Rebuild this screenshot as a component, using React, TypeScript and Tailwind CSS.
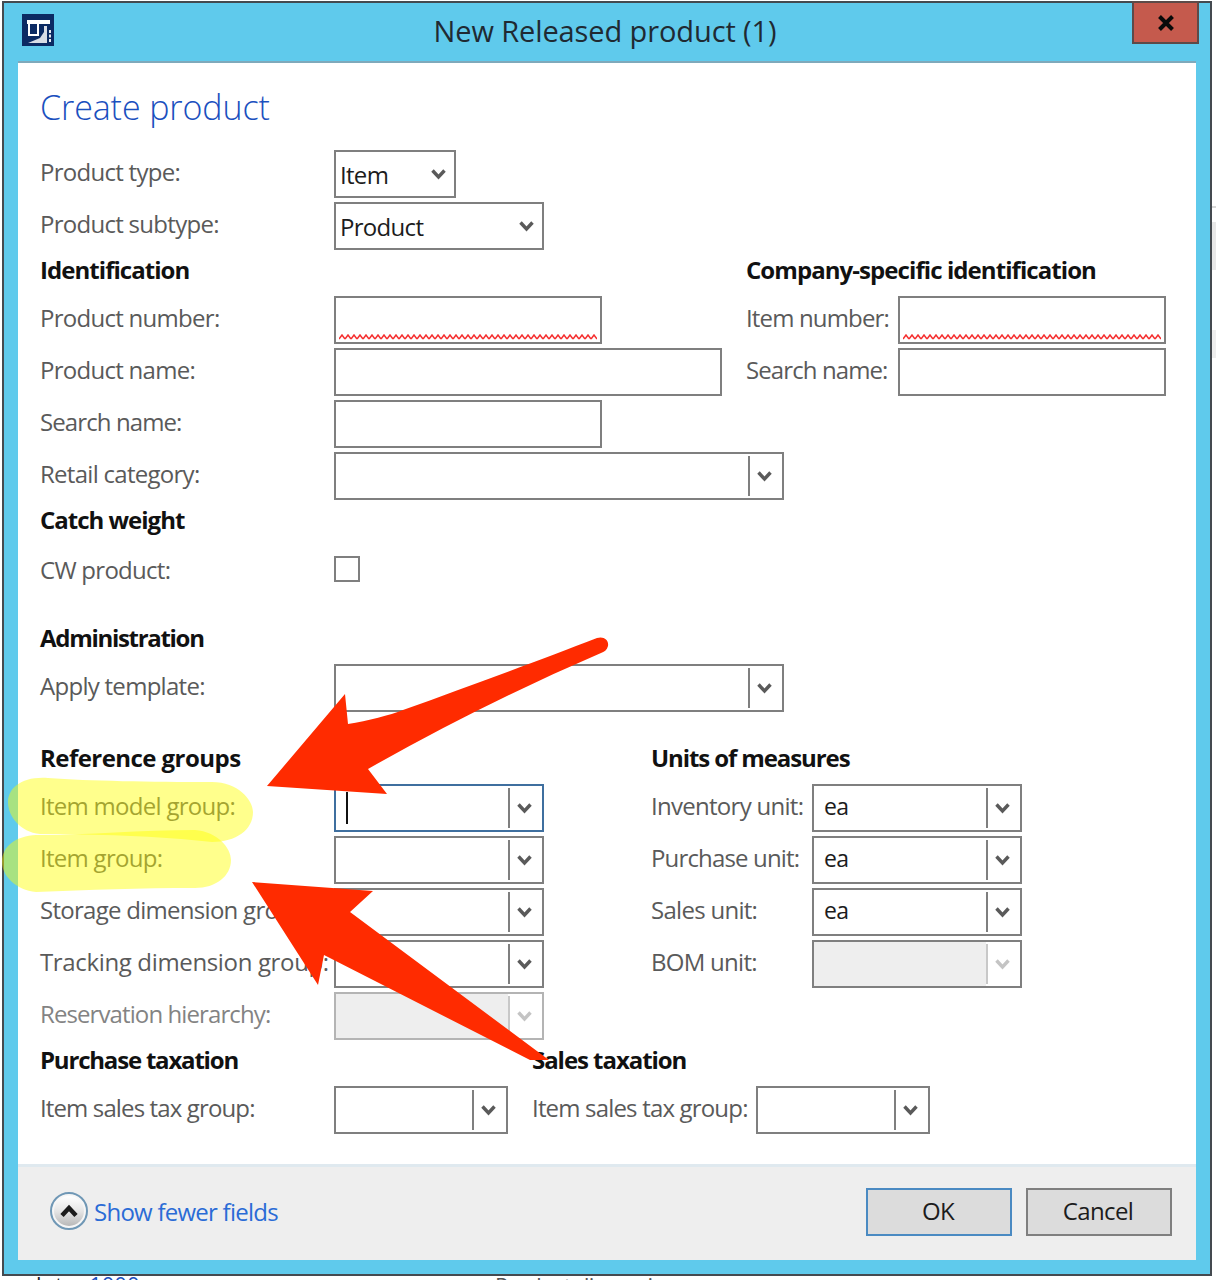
import React from "react";

const labelCls = "text-[24px] text-[#5a5a5a] whitespace-nowrap leading-none";

function Chevron({ dim }: { dim?: boolean }) {
  return (
    <svg width="15" height="11" viewBox="0 0 15 11">
      <path d="M1.5 1.5 L7.5 8 L13.5 1.5" fill="none" stroke={dim ? "#c4c4c4" : "#5a5a5a"} strokeWidth="3.4" />
    </svg>
  );
}

function Squiggle() {
  return (
    <svg className="absolute left-[3px] right-[3px] bottom-[2px] w-[calc(100%-6px)] h-[6px]" preserveAspectRatio="none">
      <defs>
        <pattern id="sq" width="6" height="6" patternUnits="userSpaceOnUse">
          <path d="M0 5 L3 1 L6 5" fill="none" stroke="#f52f2f" strokeWidth="1.5" />
        </pattern>
      </defs>
      <rect width="100%" height="6" fill="url(#sq)" />
    </svg>
  );
}

function Field({ w, squiggle }: { w: string; squiggle?: boolean }) {
  return (
    <div className={`${w} h-[48px] relative shrink-0 border-2 border-[#7f7f7f] bg-white`}>
      {squiggle && <Squiggle />}
    </div>
  );
}

function Select({ w, value }: { w: string; value: string }) {
  return (
    <div className={`${w} h-[48px] shrink-0 border-2 border-[#7f7f7f] bg-white flex items-center justify-between pl-[4px] pr-[8px]`}>
      <span className="pt-[2px] text-[24px] text-[#1c1c1c] tracking-[-0.7px] leading-none">{value}</span>
      <Chevron />
    </div>
  );
}

function Combo({
  w,
  value,
  focused,
  disabled,
  lightBorder,
}: {
  w: string;
  value?: string;
  focused?: boolean;
  disabled?: boolean;
  lightBorder?: boolean;
}) {
  const border = focused ? "border-[#3f6f9f]" : lightBorder ? "border-[#b4b4b4]" : "border-[#7f7f7f]";
  return (
    <div className={`${w} h-[48px] shrink-0 border-2 ${border} bg-white flex items-stretch`}>
      <div className={`flex-1 flex items-center ${disabled ? "bg-[#eeeeee]" : ""}`}>
        {value && <span className="pl-[10px] pb-[3px] text-[23px] text-[#1c1c1c] tracking-[-0.7px] leading-none">{value}</span>}
        {focused && <span className="ml-[10px] w-[2px] h-[32px] bg-[#111111]" />}
      </div>
      <div className="w-[34px] shrink-0 flex items-center relative">
        <div className={`absolute left-0 top-[2px] bottom-[2px] w-[2px] ${disabled ? "bg-[#c8c8c8]" : "bg-[#7f7f7f]"}`} />
        <div className="ml-[9px] flex">
          <Chevron dim={disabled} />
        </div>
      </div>
    </div>
  );
}

function Row({
  label,
  w,
  dim,
  lower,
  track = "tracking-[-0.72px]",
  children,
}: {
  label: string;
  w: string;
  dim?: boolean;
  lower?: boolean;
  track?: string;
  children: React.ReactNode;
}) {
  return (
    <div className="flex items-center h-[48px]">
      <div className={`${w} shrink-0 ${labelCls} ${track} ${dim ? "opacity-75" : ""} ${lower ? "pt-[1px]" : "pb-[4px]"}`}>{label}</div>
      {children}
    </div>
  );
}

function Heading({
  children,
  h = "h-[46px]",
  pb = "pb-[7px]",
  track = "tracking-[-1px]",
}: {
  children: React.ReactNode;
  h?: string;
  pb?: string;
  track?: string;
}) {
  return (
    <div className={`${h} ${pb} ${track} flex items-center text-[24px] font-bold text-[#111111] whitespace-nowrap leading-none`}>
      {children}
    </div>
  );
}

export default function App() {
  return (
    <div
      className="w-[1216px] h-[1280px] relative overflow-hidden bg-white"
      style={{ fontFamily: '"Open Sans", "Noto Sans", sans-serif' }}
    >
      <div className="absolute right-0 top-[206px] w-[4px] h-[2px] bg-[#d8d8d8]" />
      <div className="absolute right-0 top-[222px] w-[4px] h-[48px] bg-[#e8e8e8]" />
      <div className="absolute right-0 top-[330px] w-[4px] h-[28px] bg-[#eeeeee]" />

      {/* window */}
      <div className="ml-[2px] mt-[1px] w-[1210px] h-[1275px] border-2 border-[#444a50] bg-[#5fcaec] flex flex-col">
        {/* title bar */}
        <div className="h-[58px] shrink-0 relative flex items-center justify-center">
          <div className="absolute left-[18px] top-[11px] w-[32px] h-[32px] bg-[#0b2a63]">
            <svg width="32" height="32" viewBox="0 0 32 32" fill="none">
              <path d="M5 6 H28 V10 H5 Z" fill="#ffffff" />
              <path d="M7 10 V21 H16 V10" stroke="#ffffff" strokeWidth="2" />
              <path d="M6 29 L18 24 L22 18 L22 12 L25 12 L25 29 Z" fill="#d8dde6" />
              <path d="M28 16 V29" stroke="#e8ecf2" strokeWidth="2" strokeDasharray="3 1.5" />
            </svg>
          </div>
          <div className="text-[29px] text-[#1f2a33] tracking-[-0.1px] leading-none pb-[3px] pr-[4px]">New Released product (1)</div>
          <div className="absolute right-[11px] top-[-2px] w-[67px] h-[43px] bg-[#c55a4d] border-2 border-[#5d4a48] flex items-center justify-center">
            <svg width="18" height="16" viewBox="0 0 18 16">
              <path d="M2.5 1.5 L15.5 14.5 M15.5 1.5 L2.5 14.5" stroke="#0a0a0a" strokeWidth="4" />
            </svg>
          </div>
        </div>

        {/* client area */}
        <div className="mx-[14px] flex-1 mb-[14px] bg-white flex flex-col border-t-2 border-[#7fa9bb] min-h-0">
          <div className="flex-1 pl-[22px] flex flex-col">
            <div className="h-[87px] flex items-center text-[34px] font-light text-[#1a4fbe] tracking-[-0.1px] leading-none">
              Create product
            </div>

            <div className="flex flex-col gap-[4px]">
              <Row label="Product type:" w="w-[294px]"><Select w="w-[122px]" value="Item" /></Row>
              <Row label="Product subtype:" w="w-[294px]"><Select w="w-[210px]" value="Product" /></Row>
            </div>

            <div className="flex">
              <div className="w-[706px] shrink-0 flex flex-col">
                <Heading track="tracking-[-0.95px]">Identification</Heading>
                <div className="flex flex-col gap-[4px]">
                  <Row label="Product number:" w="w-[294px]"><Field w="w-[268px]" squiggle /></Row>
                  <Row label="Product name:" w="w-[294px]"><Field w="w-[388px]" /></Row>
                  <Row label="Search name:" w="w-[294px]" track="tracking-[-0.9px]"><Field w="w-[268px]" /></Row>
                  <Row label="Retail category:" w="w-[294px]"><Combo w="w-[450px]" /></Row>
                </div>
              </div>
              <div className="flex flex-col">
                <Heading track="tracking-[-0.93px]">Company-specific identification</Heading>
                <div className="flex flex-col gap-[4px]">
                  <Row label="Item number:" w="w-[152px]" track="tracking-[-0.85px]"><Field w="w-[268px]" squiggle /></Row>
                  <Row label="Search name:" w="w-[152px]" track="tracking-[-0.9px]"><Field w="w-[268px]" /></Row>
                </div>
              </div>
            </div>

            <Heading h="h-[45px]" pb="pb-[6px]">Catch weight</Heading>
            <Row label="CW product:" w="w-[294px]" lower>
              <div className="w-[26px] h-[26px] border-2 border-[#7f7f7f] bg-white" />
            </Row>

            <div className="mt-[25px]">
              <Heading track="tracking-[-1.3px]">Administration</Heading>
              <Row label="Apply template:" w="w-[294px]"><Combo w="w-[450px]" /></Row>
            </div>

            <div className="mt-[26px] flex">
              <div className="w-[611px] shrink-0 flex flex-col">
                <Heading track="tracking-[-0.55px]">Reference groups</Heading>
                <div className="flex flex-col gap-[4px]">
                  <Row label="Item model group:" w="w-[294px]"><Combo w="w-[210px]" focused /></Row>
                  <Row label="Item group:" w="w-[294px]"><Combo w="w-[210px]" /></Row>
                  <Row label="Storage dimension group:" w="w-[294px]"><Combo w="w-[210px]" /></Row>
                  <Row label="Tracking dimension group:" w="w-[294px]" track="tracking-[-0.35px]"><Combo w="w-[210px]" /></Row>
                  <Row label="Reservation hierarchy:" w="w-[294px]" dim track="tracking-[-0.9px]"><Combo w="w-[210px]" disabled lightBorder /></Row>
                </div>
              </div>
              <div className="flex flex-col">
                <Heading track="tracking-[-1.1px]">Units of measures</Heading>
                <div className="flex flex-col gap-[4px]">
                  <Row label="Inventory unit:" w="w-[161px]"><Combo w="w-[210px]" value="ea" /></Row>
                  <Row label="Purchase unit:" w="w-[161px]" track="tracking-[-0.85px]"><Combo w="w-[210px]" value="ea" /></Row>
                  <Row label="Sales unit:" w="w-[161px]"><Combo w="w-[210px]" value="ea" /></Row>
                  <Row label="BOM unit:" w="w-[161px]"><Combo w="w-[210px]" disabled /></Row>
                </div>
              </div>
            </div>

            <div className="flex">
              <div className="w-[492px] shrink-0 flex flex-col">
                <Heading track="tracking-[-1.2px]">Purchase taxation</Heading>
                <Row label="Item sales tax group:" w="w-[294px]" track="tracking-[-0.87px]"><Combo w="w-[174px]" /></Row>
              </div>
              <div className="flex flex-col">
                <Heading track="tracking-[-1.05px]">Sales taxation</Heading>
                <Row label="Item sales tax group:" w="w-[224px]" track="tracking-[-0.82px]"><Combo w="w-[174px]" /></Row>
              </div>
            </div>
          </div>

          {/* footer */}
          <div className="h-[96px] shrink-0 border-t-[3px] border-[#dfe9ef] bg-[#eeeeee] flex items-center justify-between pb-[3px] pl-[32px] pr-[24px]">
            <div className="flex items-center gap-[6px] pb-[2px]">
              <div className="w-[38px] h-[38px] rounded-full border-2 border-[#6f97b5] bg-[#f6f6f6] flex items-center justify-center">
                <div className="w-[30px] h-[30px] rounded-full bg-gradient-to-b from-[#ffffff] via-[#e6e6e6] to-[#b8b8b8] flex items-center justify-center">
                  <svg width="20" height="14" viewBox="0 0 20 14">
                    <path d="M3 11.5 L10 4 L17 11.5" fill="none" stroke="#1c1c1c" strokeWidth="4.5" />
                  </svg>
                </div>
              </div>
              <span className="pt-[1px] text-[24px] text-[#2a6bd6] tracking-[-0.75px] leading-none">Show fewer fields</span>
            </div>
            <div className="flex gap-[14px]">
              <button className="w-[146px] h-[48px] border-2 border-[#4a8ac2] bg-[#dcdcdc] pb-[2px] pr-[2px] text-[24px] text-[#1c1c1c] tracking-[-0.7px] leading-none">OK</button>
              <button className="w-[146px] h-[48px] border-2 border-[#7f7f7f] bg-[#dcdcdc] pb-[2px] pr-[2px] text-[24px] text-[#1c1c1c] tracking-[-0.6px] leading-none">Cancel</button>
            </div>
          </div>
        </div>
      </div>

      {/* clipped text below window */}
      <div className="absolute left-[36px] top-[1273px] text-[22px] text-[#222222] leading-none">
        l <span className="ml-[8px]">te</span> <span className="text-[#1a4fbe] ml-[8px]">1000</span>
      </div>
      <div className="absolute left-[495px] top-[1274px] text-[22px] text-[#555555] tracking-[-0.7px] leading-none">Product dimension</div>

      {/* annotations drawn over the dialog */}
      <svg className="absolute inset-0 pointer-events-none" width="1216" height="1280" viewBox="0 0 1216 1280">
        <path
          d="M48 778 C90 781 150 782 212 782 C238 782 253 800 253 812 C253 830 236 842 212 842 C160 836 90 834 40 834 C20 832 8 816 8 802 C8 788 22 776 48 778 Z"
          fill="#ffff00"
          fillOpacity="0.45"
        />
        <path
          d="M36 835 C90 835 140 830 195 830 C218 832 231 848 231 860 C231 876 216 888 195 888 C140 888 90 890 36 892 C16 890 2 876 2 862 C2 846 16 836 36 835 Z"
          fill="#ffff00"
          fillOpacity="0.45"
        />
        <path
          d="M267 786 L345 694 L348 724 C368 721 390 715 403 710 C470 686 540 660 597 638 C604 636 609 640 608 646 C607 650 604 652 601 653 Q480 705 368 769 L387 794 Z"
          fill="#ff2b00"
        />
        <path
          d="M252 882 L373 891 L350 912 L549 1060 L530 1060 L324 955 L318 985 Z"
          fill="#ff2b00"
        />
      </svg>
    </div>
  );
}
